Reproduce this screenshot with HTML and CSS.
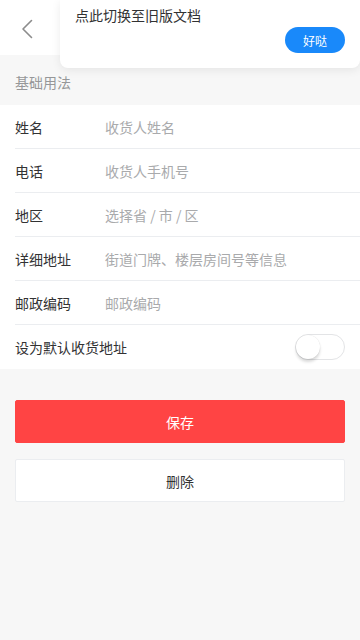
FILE: index.html
```html
<!DOCTYPE html>
<html lang="zh">
<head>
<meta charset="utf-8">
<meta name="viewport" content="width=device-width, initial-scale=1">
<link rel="stylesheet" href="styles.css">
</head>
<body>
<div class="page">
  <header class="nav">
    <span class="back">
      <svg width="12" height="20" viewBox="0 0 12 20"><path d="M10.5 1.5 L2 10 L10.5 18.5" fill="none" stroke="#8c8c8c" stroke-width="1.6" stroke-linecap="round" stroke-linejoin="round"/></svg>
    </span>
  </header>
  <div class="tip">
    <div class="tip-text">点此切换至旧版文档</div>
    <div class="tip-actions"><button class="tip-btn">好哒</button></div>
  </div>
  <div class="section-title">基础用法</div>
  <div class="cells">
    <div class="cell"><span class="label">姓名</span><span class="ph">收货人姓名</span></div>
    <div class="cell"><span class="label">电话</span><span class="ph">收货人手机号</span></div>
    <div class="cell"><span class="label">地区</span><span class="ph">选择省 / 市 / 区</span></div>
    <div class="cell"><span class="label">详细地址</span><span class="ph">街道门牌、楼层房间号等信息</span></div>
    <div class="cell"><span class="label">邮政编码</span><span class="ph">邮政编码</span></div>
    <div class="cell cell-last"><span class="label wide">设为默认收货地址</span><span class="switch"><span class="knob"></span></span></div>
  </div>
  <div class="actions">
    <button class="btn btn-save">保存</button>
    <button class="btn btn-del">删除</button>
  </div>
</div>
</body>
</html>
```
FILE: styles.css
```css
* { box-sizing: border-box; }
html, body { margin: 0; padding: 0; }
body {
  width: 360px;
  height: 640px;
  background: #f7f8fa;
  font-family: "Noto Sans CJK SC", "Noto Sans", sans-serif;
  color: #323233;
  overflow: hidden;
}
.page { position: relative; min-height: 640px; background: #f7f7f7; }
.nav {
  height: 55px;
  background: #fff;
  display: flex;
  align-items: center;
  padding-left: 21px;
}
.back { display: flex; margin-top: 3px; }
.tip {
  position: absolute;
  left: 60px;
  top: 0;
  width: 300px;
  height: 68px;
  background: #fff;
  border-radius: 0 0 8px 8px;
  box-shadow: 0 2px 10px rgba(0,0,0,0.08);
  padding: 4px 15px 0 15px;
}
.tip-text { font-size: 14px; line-height: 22px; color: #323233; }
.tip-actions { display: flex; justify-content: flex-end; margin-top: 1px; }
.tip-btn {
  width: 60px;
  height: 26px;
  border: 0;
  border-radius: 13px;
  background: #1989fa;
  color: #fff;
  font-family: inherit;
  font-size: 12px;
  padding: 0;
}
.section-title {
  height: 50px;
  padding: 0 15px 13px;
  display: flex;
  align-items: flex-end;
  font-size: 14px;
  line-height: 20px;
  color: #969799;
}
.cells { background: #fff; }
.cell {
  height: 44px;
  margin-left: 15px;
  padding-right: 15px;
  border-bottom: 1px solid #ebedf0;
  display: flex;
  align-items: center;
  font-size: 14px;
}
.cell-last { border-bottom: 0; }
.label { width: 90px; color: #323233; flex: none; }
.label.wide { width: auto; flex: 1; }
.ph { color: #a9aaac; }
.switch {
  position: relative;
  width: 50px;
  height: 26px;
  border: 1px solid #e3e4e6;
  border-radius: 13px;
  background: #fff;
}
.knob {
  position: absolute;
  left: 0;
  top: 0;
  width: 24px;
  height: 24px;
  border-radius: 50%;
  background: #fff;
  box-shadow: 0 3px 3px rgba(0,0,0,0.15), 0 0 1px rgba(0,0,0,0.15);
}
.actions {
  padding: 31px 15px 0;
  display: flex;
  flex-direction: column;
  gap: 16px;
}
.btn {
  height: 43px;
  width: 100%;
  border-radius: 2px;
  font-family: inherit;
  font-size: 14px;
  padding: 0;
}
.btn-save { background: #ff4444; border: 1px solid #ff4444; color: #fff; }
.btn-del { background: #fff; border: 1px solid #ebedf0; color: #323233; }
```
